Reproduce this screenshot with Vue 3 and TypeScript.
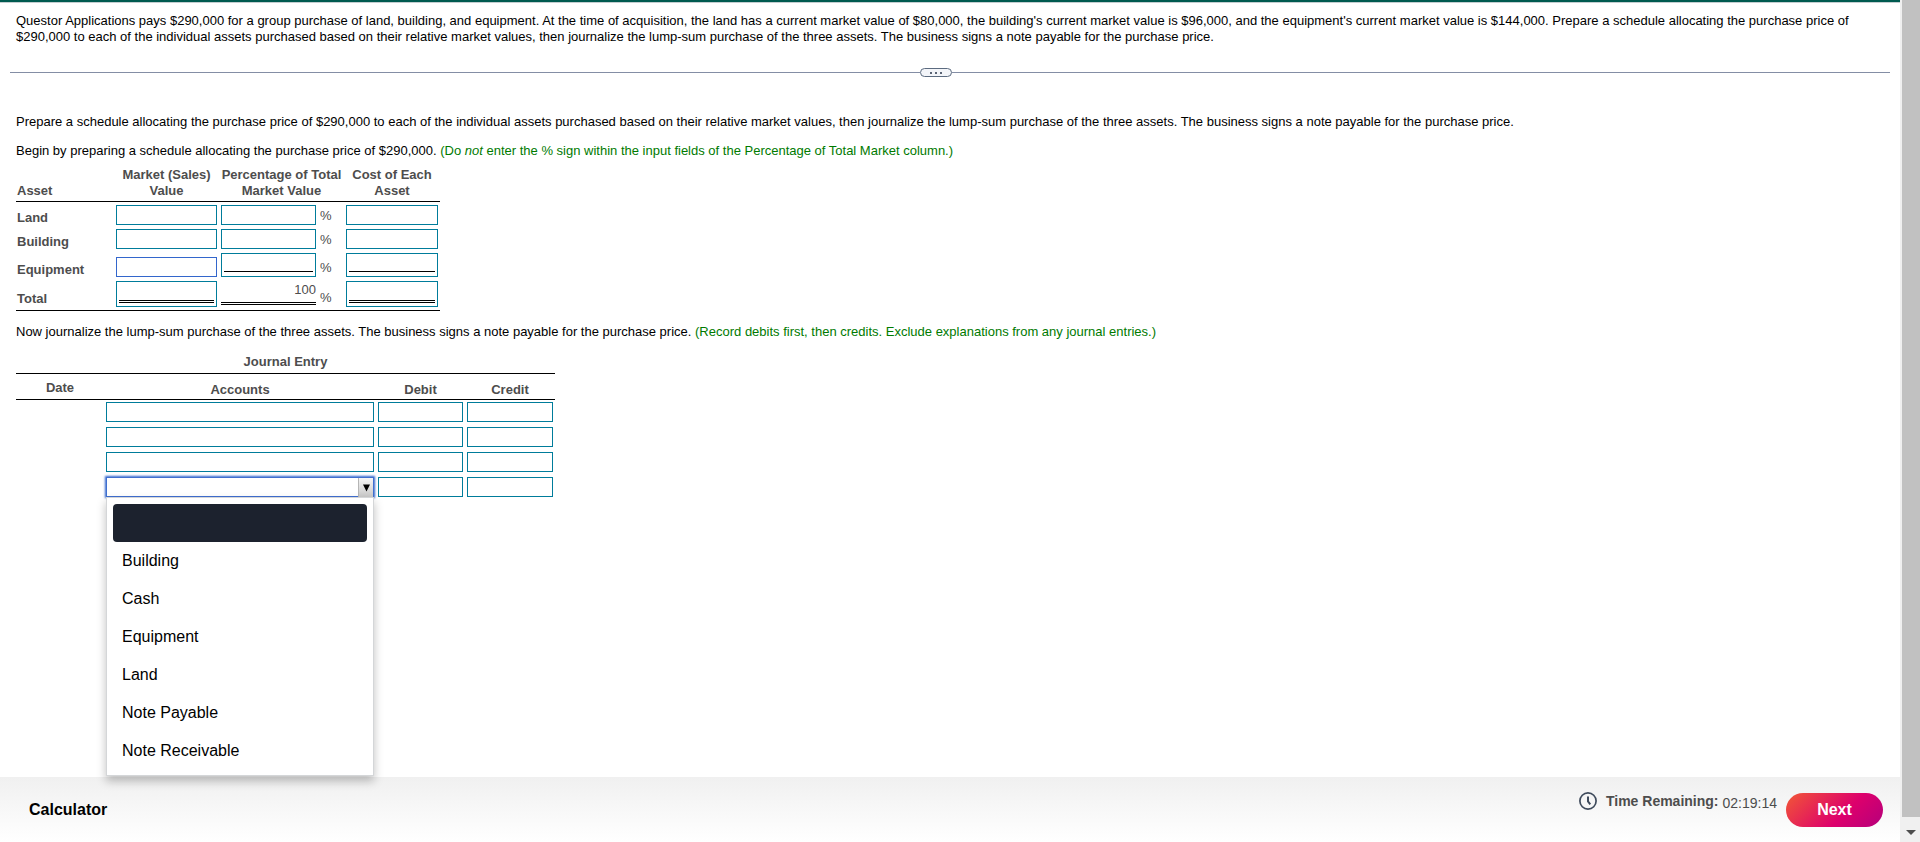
<script setup lang="ts">
import { ref } from 'vue'

type Field = 'plain' | 'single' | 'double'

interface AssetRow {
  name: string
  market: Field
  rest: Field
  focused?: boolean
  fixedPercent?: string
}

const assetRows: AssetRow[] = [
  { name: 'Land', market: 'plain', rest: 'plain' },
  { name: 'Building', market: 'plain', rest: 'plain' },
  { name: 'Equipment', market: 'plain', rest: 'single', focused: true },
  { name: 'Total', market: 'double', rest: 'double', fixedPercent: '100' },
]

const accounts: string[] = ['', 'Building', 'Cash', 'Equipment', 'Land', 'Note Payable', 'Note Receivable']
const journal = ref([
  { account: '', debit: '', credit: '' },
  { account: '', debit: '', credit: '' },
  { account: '', debit: '', credit: '' },
  { account: '', debit: '', credit: '' },
])
const openRow = ref(3)

function choose(row: number, account: string) {
  journal.value[row].account = account
  openRow.value = -1
}
</script>

<template>
  <div class="page">
    <div class="content">
      <main class="question">
        <p class="text intro">
          Questor Applications pays $290,000 for a group purchase of land, building, and equipment. At the time of
          acquisition, the land has a current market value of $80,000, the building's current market value is $96,000,
          and the equipment's current market value is $144,000. Prepare a schedule allocating the purchase price of
          $290,000 to each of the individual assets purchased based on their relative market values, then journalize
          the lump-sum purchase of the three assets. The business signs a note payable for the purchase price.
        </p>

        <div class="divider">
          <span class="line before"></span>
          <button class="handle" type="button" aria-label="Resize panes">
            <i></i><i></i><i></i>
          </button>
          <span class="line after"></span>
        </div>

        <p class="text prompt">
          Prepare a schedule allocating the purchase price of $290,000 to each of the individual assets purchased based
          on their relative market values, then journalize the lump-sum purchase of the three assets. The business
          signs a note payable for the purchase price.
        </p>
        <p class="text begin">
          Begin by preparing a schedule allocating the purchase price of $290,000.
          <span class="hint">(Do <em>not</em> enter the % sign within the input fields of the Percentage of Total Market column.)</span>
        </p>

        <table class="grid schedule">
          <colgroup>
            <col class="c-asset" /><col class="c-market" /><col class="c-percent" /><col class="c-cost" />
          </colgroup>
          <thead>
            <tr>
              <th class="left">Asset</th>
              <th>Market (Sales)<br />Value</th>
              <th>Percentage of Total<br />Market Value</th>
              <th>Cost of Each<br />Asset</th>
            </tr>
          </thead>
          <tbody>
            <tr v-for="row in assetRows" :key="row.name">
              <th class="left" scope="row">{{ row.name }}</th>
              <td>
                <div class="box" :class="[row.market, { focused: row.focused }]">
                  <input type="text" :aria-label="row.name + ' market value'" />
                </div>
              </td>
              <td>
                <div class="percent">
                  <div v-if="row.fixedPercent" class="fixed">{{ row.fixedPercent }}</div>
                  <div v-else class="box" :class="row.rest">
                    <input type="text" :aria-label="row.name + ' percentage of total'" />
                  </div>
                  <span class="sign">%</span>
                </div>
              </td>
              <td>
                <div class="box" :class="row.rest">
                  <input type="text" :aria-label="row.name + ' cost'" />
                </div>
              </td>
            </tr>
          </tbody>
        </table>

        <p class="text now">
          Now journalize the lump-sum purchase of the three assets. The business signs a note payable for the purchase price.
          <span class="hint">(Record debits first, then credits. Exclude explanations from any journal entries.)</span>
        </p>

        <table class="grid journal">
          <caption>Journal Entry</caption>
          <colgroup>
            <col class="c-date" /><col class="c-accounts" /><col class="c-debit" /><col class="c-credit" />
          </colgroup>
          <thead>
            <tr>
              <th class="date">Date</th>
              <th>Accounts</th>
              <th>Debit</th>
              <th>Credit</th>
            </tr>
          </thead>
          <tbody>
            <tr v-for="(entry, i) in journal" :key="i">
              <td></td>
              <td>
                <div class="combo" :class="{ open: openRow === i }">
                  <select v-model="entry.account" :aria-label="'Account ' + (i + 1)">
                    <option v-for="a in accounts" :key="a" :value="a">{{ a }}</option>
                  </select>
                  <span v-if="openRow === i" class="arrow">
                    <svg width="7" height="8" viewBox="0 0 7 8" aria-hidden="true"><path d="M0 0.5h7L3.5 7.5z" /></svg>
                  </span>
                  <ul v-if="openRow === i" class="menu" role="listbox" aria-label="Accounts">
                    <li
                      v-for="a in accounts"
                      :key="a"
                      role="option"
                      :aria-selected="a === entry.account"
                      :class="{ active: a === entry.account }"
                      @click="choose(i, a)"
                    >{{ a }}</li>
                  </ul>
                </div>
              </td>
              <td><div class="box plain"><input v-model="entry.debit" type="text" :aria-label="'Debit ' + (i + 1)" /></div></td>
              <td><div class="box plain"><input v-model="entry.credit" type="text" :aria-label="'Credit ' + (i + 1)" /></div></td>
            </tr>
          </tbody>
        </table>
      </main>

      <footer class="footer">
        <button class="calculator" type="button">Calculator</button>
        <div class="timer">
          <svg width="18" height="18" viewBox="0 0 18 18" fill="none" aria-hidden="true">
            <circle cx="9" cy="9" r="8.1" stroke="#3f4b5c" stroke-width="1.7" />
            <path d="M9 4.5v5l2.3 2.8" stroke="#3f4b5c" stroke-width="2" />
          </svg>
          <strong>Time Remaining:</strong>
          <span class="clock">02:19:14</span>
        </div>
        <button class="next" type="button">Next</button>
      </footer>
    </div>

    <div class="scrollbar" aria-hidden="true">
      <div class="thumb"></div>
      <div class="down">
        <svg width="10" height="5" viewBox="0 0 10 5"><path d="M0 0h10L5 5z" fill="#4d4d4d" /></svg>
      </div>
    </div>
  </div>
</template>

<style>
body {
  margin: 0;
  background: #fff;
}
</style>

<style scoped>
.page {
  display: flex;
  min-height: 100vh;
  font-family: "Liberation Sans", Arial, sans-serif;
  font-size: 13px;
  line-height: 16px;
  color: #000;
}

.page * {
  box-sizing: border-box;
}

.content {
  flex: 1;
  min-width: 0;
  display: flex;
  flex-direction: column;
  border-top: 2px solid #005a50;
}

.question {
  flex: 1;
  border-top: 1px solid #c4cdd0;
}

.text {
  margin: 0 16px;
}

.intro {
  padding-top: 10px;
  padding-right: 28px;
}

.hint {
  color: #007a00;
}

.divider {
  display: flex;
  align-items: center;
  margin: 23px 10px 0;
}

.line {
  height: 1px;
  background: #848ea5;
}

.before {
  flex: 65;
}

.after {
  flex: 67;
}

.handle {
  display: flex;
  justify-content: center;
  align-items: center;
  gap: 3px;
  width: 32px;
  height: 9px;
  padding: 0;
  border: 1px solid #5c6b80;
  border-radius: 5px;
  background: #f3f5f9;
}

.handle i {
  width: 2px;
  height: 2px;
  background: #5a6475;
}

.prompt {
  margin-top: 37px;
}

.begin {
  margin-top: 13px;
}

.now {
  margin-top: 13px;
}

.grid {
  table-layout: fixed;
  border-collapse: separate;
  border-spacing: 0;
  margin-left: 16px;
  color: #4d4d4d;
}

.grid td {
  padding: 0 2px;
}

.grid th {
  padding: 0;
  font-weight: bold;
}

.grid thead th {
  border-bottom: 1px solid #000;
}

.grid .left {
  text-align: left;
  padding-left: 1px;
}

.schedule {
  width: 424px;
  margin-top: 8px;
}

.c-asset { width: 98px; }
.c-market { width: 105px; }
.c-percent { width: 125px; }
.c-cost { width: 96px; }

.schedule thead th {
  height: 35px;
  vertical-align: bottom;
  padding-bottom: 2px;
}

.schedule tbody td {
  padding: 2px;
  vertical-align: bottom;
}

.schedule tbody tr:first-child td {
  padding-top: 3px;
}

.schedule tbody .left {
  vertical-align: bottom;
  padding-bottom: 1px;
}

.schedule tbody tr:last-child > * {
  border-bottom: 1px solid #000;
  padding-bottom: 3px;
}

.box {
  display: flex;
  width: 100%;
  height: 20px;
  border: 1px solid #007c9b;
  background: #fff;
}

.box.focused {
  border-color: #3366cc;
}

.box.single {
  height: 24px;
  padding: 0 2px 4px;
}

.box.double {
  height: 26px;
  padding: 0 2px 3px;
}

.box input {
  flex: 1;
  min-width: 0;
  width: 100%;
  padding: 0 2px;
  border: 0;
  outline: 0;
  background: transparent;
  font: inherit;
  color: inherit;
}

.single input {
  border-bottom: 1px solid #000;
}

.double input,
.fixed {
  border-bottom: 3px double #000;
}

.percent {
  display: flex;
  align-items: flex-end;
  gap: 4px;
}

.percent .box,
.fixed {
  width: 95px;
}

.fixed {
  height: 23px;
  margin-bottom: 2px;
  text-align: right;
}

.sign {
  padding-bottom: 1px;
}

.journal {
  width: 539px;
  margin-top: 14px;
}

.journal caption {
  height: 20px;
  border-bottom: 1px solid #000;
  font-weight: bold;
}

.c-date { width: 88px; }
.c-accounts { width: 272px; }
.c-debit { width: 89px; }
.c-credit { width: 90px; }

.journal thead th {
  height: 26px;
  padding-top: 6px;
}

.journal thead .date {
  vertical-align: top;
}

.journal tbody td {
  height: 25px;
  padding: 2px 2px 3px;
}

.combo {
  position: relative;
  height: 20px;
}

.combo select {
  display: block;
  width: 100%;
  height: 20px;
  margin: 0;
  padding: 0 4px;
  appearance: none;
  border: 1px solid #007c9b;
  border-radius: 0;
  outline: 0;
  background: #fff;
  font: inherit;
}

.combo.open select {
  border-color: #3f6fd0;
  box-shadow: 0 0 2px 1px #3366cc;
}

.arrow {
  position: absolute;
  top: 1px;
  right: 1px;
  display: flex;
  align-items: center;
  justify-content: center;
  width: 15px;
  height: 19px;
  border-left: 1px solid #b5b5b5;
  background: linear-gradient(#f6f6f6, #c8c8c8);
  pointer-events: none;
}

.menu {
  position: absolute;
  z-index: 5;
  top: 100%;
  left: 0;
  width: 100%;
  margin: 0;
  padding: 6px 6px 5px;
  list-style: none;
  border: 1px solid #d4d6d8;
  background: #fff;
  box-shadow: 0 5px 9px rgba(0, 0, 0, 0.25);
  font-size: 16px;
  line-height: 38px;
  color: #000;
}

.menu li {
  height: 38px;
  padding-left: 9px;
  border-radius: 4px;
  cursor: pointer;
}

.menu .active {
  background: #1c222e;
}

.footer {
  display: flex;
  align-items: center;
  height: 65px;
  padding: 0 17px 0 29px;
  background: linear-gradient(#f0f0f0, #fff);
}

.calculator {
  margin-right: auto;
  padding: 0;
  border: 0;
  background: none;
  font: bold 16px/20px "Liberation Sans", Arial, sans-serif;
  color: #000;
}

.timer {
  display: flex;
  align-items: center;
  margin: 0 9px 18px 0;
  font-size: 14px;
  line-height: 18px;
  color: #4d4d4d;
}

.timer strong {
  margin: 0 4px 0 9px;
}

.clock {
  padding-top: 4px;
}

.next {
  width: 97px;
  height: 34px;
  padding: 0;
  border: 0;
  border-radius: 17px;
  background: linear-gradient(135deg, #f0503a 5%, #dd006c 60%, #b4007c);
  font: bold 16px/20px "Liberation Sans", Arial, sans-serif;
  color: #fff;
}

.scrollbar {
  display: flex;
  flex-direction: column;
  width: 20px;
  padding-left: 2px;
  background: #f0f0f0;
}

.thumb {
  flex: 1;
  background: #c1c1c1;
}

.down {
  display: flex;
  align-items: center;
  justify-content: center;
  height: 25px;
  padding-top: 6px;
}
</style>
